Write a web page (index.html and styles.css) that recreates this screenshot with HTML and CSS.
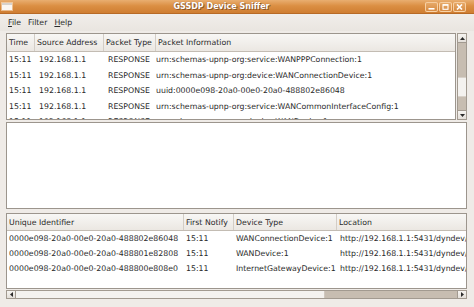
FILE: index.html
```html
<!DOCTYPE html>
<html>
<head>
<meta charset="utf-8">
<link rel="stylesheet" href="styles.css">
</head>
<body>
<div class="window">
  <div class="titlebar">
    <span class="winicon"></span>
    <span class="title">GSSDP Device Sniffer</span>
    <div class="wbtns">
      <span class="wbtn"><svg width="7" height="6" viewBox="0 0 7 6"><rect x="0.5" y="4" width="6" height="1.6" fill="#fff"/></svg></span>
      <span class="wbtn"><svg width="7" height="6" viewBox="0 0 7 6"><rect x="1" y="0.7" width="5" height="4.6" fill="none" stroke="#fff" stroke-width="1.1"/><rect x="1" y="0.5" width="5" height="1.2" fill="#fff"/></svg></span>
      <span class="wbtn"><svg width="7" height="6" viewBox="0 0 7 6"><path d="M1 0.5 L6 5.5 M6 0.5 L1 5.5" stroke="#fff" stroke-width="1.6"/></svg></span>
    </div>
  </div>
  <div class="menubar">
    <span class="mi"><u>F</u>ile</span>
    <span class="mi">Filter</span>
    <span class="mi"><u>H</u>elp</span>
  </div>
  <div class="content">
    <div class="upper">
      <div class="frame packets">
        <div class="hdr prow">
          <div class="hc c1">Time</div>
          <div class="hc c2">Source Address</div>
          <div class="hc c3">Packet Type</div>
          <div class="hc c4">Packet Information</div>
        </div>
        <div class="row prow">
          <div class="c c1">15:11</div><div class="c c2">192.168.1.1</div><div class="c c3">RESPONSE</div><div class="c c4">urn:schemas-upnp-org:service:WANPPPConnection:1</div>
        </div>
        <div class="row prow">
          <div class="c c1">15:11</div><div class="c c2">192.168.1.1</div><div class="c c3">RESPONSE</div><div class="c c4">urn:schemas-upnp-org:device:WANConnectionDevice:1</div>
        </div>
        <div class="row prow">
          <div class="c c1">15:11</div><div class="c c2">192.168.1.1</div><div class="c c3">RESPONSE</div><div class="c c4">uuid:0000e098-20a0-00e0-20a0-488802e86048</div>
        </div>
        <div class="row prow">
          <div class="c c1">15:11</div><div class="c c2">192.168.1.1</div><div class="c c3">RESPONSE</div><div class="c c4">urn:schemas-upnp-org:service:WANCommonInterfaceConfig:1</div>
        </div>
        <div class="row prow">
          <div class="c c1">15:11</div><div class="c c2">192.168.1.1</div><div class="c c3">RESPONSE</div><div class="c c4">urn:schemas-upnp-org:device:WANDevice:1</div>
        </div>
      </div>
      <div class="vscroll">
        <div class="sbtn"><svg width="5" height="3" viewBox="0 0 5 3"><polygon points="0,3 5,3 2.5,0" fill="#2a2a2a"/></svg></div>
        <div class="vtrough"><div class="vthumb"></div></div>
        <div class="sbtn"><svg width="5" height="3" viewBox="0 0 5 3"><polygon points="0,0 5,0 2.5,3" fill="#2a2a2a"/></svg></div>
      </div>
    </div>
    <div class="frame middle"></div>
    <div class="frame devices">
      <div class="hdr drow">
        <div class="hc d1">Unique Identifier</div>
        <div class="hc d2">First Notify</div>
        <div class="hc d3">Device Type</div>
        <div class="hc d4">Location</div>
      </div>
      <div class="row drow">
        <div class="c d1">0000e098-20a0-00e0-20a0-488802e86048</div><div class="c d2">15:11</div><div class="c d3">WANConnectionDevice:1</div><div class="c d4">http://192.168.1.1:5431/dyndev/uuid:0000e098-20a0-00e0-20a0-488802e86048</div>
      </div>
      <div class="row drow">
        <div class="c d1">0000e098-20a0-00e0-20a0-488801e82808</div><div class="c d2">15:11</div><div class="c d3">WANDevice:1</div><div class="c d4">http://192.168.1.1:5431/dyndev/uuid:0000e098-20a0-00e0-20a0-488801e82808</div>
      </div>
      <div class="row drow">
        <div class="c d1">0000e098-20a0-00e0-20a0-488800e808e0</div><div class="c d2">15:11</div><div class="c d3">InternetGatewayDevice:1</div><div class="c d4">http://192.168.1.1:5431/dyndev/uuid:0000e098-20a0-00e0-20a0-488800e808e0</div>
      </div>
    </div>
    <div class="hscroll">
      <div class="sbtn h"><svg width="3" height="5" viewBox="0 0 3 5"><polygon points="3,0 3,5 0,2.5" fill="#2a2a2a"/></svg></div>
      <div class="hthumb"></div>
      <div class="htrough"></div>
      <div class="sbtn h"><svg width="3" height="5" viewBox="0 0 3 5"><polygon points="0,0 0,5 3,2.5" fill="#2a2a2a"/></svg></div>
    </div>
  </div>
</div>
</body>
</html>
```

FILE: styles.css
```css
* { box-sizing: border-box; }
html, body { margin: 0; padding: 0; }
body {
  width: 474px;
  height: 307px;
  overflow: hidden;
  font-family: "DejaVu Sans", "Liberation Sans", sans-serif;
  font-size: 7.8px;
  color: #2a2a2a;
  background: #efebe7;
}
.window {
  width: 474px;
  height: 307px;
  display: flex;
  flex-direction: column;
  background: #efebe7;
}
.titlebar {
  height: 14px;
  flex: none;
  display: flex;
  align-items: center;
  padding: 0 8px 0 2px;
  background: linear-gradient(#e9ae70, #db8f43 45%, #cf7e32);
  border-bottom: 1px solid #b76a26;
}
.winicon {
  width: 10px;
  height: 7px;
  background: #fbf7f2;
  border-top: 2px solid #d8d2cb;
  box-shadow: 0 0 0 1px rgba(255, 240, 220, 0.5);
}
.title {
  flex: 1;
  text-align: center;
  padding-left: 6px;
  font-weight: bold;
  font-size: 8px;
  color: #fff;
  line-height: 13px;
  text-shadow: 1px 1px 0 #8e5727, 0 0 1px #9a5e2a;
}
.wbtns { display: flex; gap: 1px; }
.wbtn {
  width: 13px;
  height: 10px;
  border: 1px solid rgba(255, 225, 190, 0.75);
  border-radius: 2px;
  background: linear-gradient(#e7a968, #d68b43);
  display: flex;
  align-items: center;
  justify-content: center;
}
.menubar {
  height: 17px;
  flex: none;
  display: flex;
  align-items: center;
  gap: 7px;
  padding-left: 8px;
  background: linear-gradient(#f1eeea, #e9e5e0);
}
.mi { line-height: 17px; }
.mi u { text-decoration: underline; text-underline-offset: 1px; }
.content {
  flex: 1;
  display: flex;
  flex-direction: column;
  padding: 2px 7px 0 6px;
}
.frame {
  border: 1px solid #9c958d;
  background: #fff;
  overflow: hidden;
}
.upper {
  height: 87px;
  flex: none;
  display: flex;
  gap: 1px;
}
.packets { flex: 1; }
.prow {
  display: grid;
  grid-template-columns: 27px 69px 52px 1fr;
}
.drow {
  display: grid;
  grid-template-columns: 176px 50px 103px 1fr;
}
.hdr {
  height: 18px;
  background: linear-gradient(#f8f7f5, #ebe7e2);
  border-bottom: 1px solid #c3bcb3;
}
.devices .hdr { height: 17px; }
.hc {
  line-height: 17px;
  white-space: nowrap;
  overflow: hidden;
  padding-left: 2px;
}
.hc + .hc { border-left: 1px solid #d3cdc6; }
.row { height: 15.5px; }
.devices .row { height: 15px; }
.c {
  white-space: nowrap;
  overflow: hidden;
  line-height: 15.5px;
  padding-left: 2px;
}
.devices .c { line-height: 15px; }
.packets .c.c2, .packets .c.c3 { padding-left: 5px; }
.packets .c.c4 { padding-left: 1px; }
.devices .c.d2 { padding-left: 3px; }
.devices .c.d3 { padding-left: 3px; }
.devices .c.d4 { padding-left: 4px; }

.vscroll {
  width: 10px;
  flex: none;
  display: flex;
  flex-direction: column;
  border: 1px solid #a29a90;
  background: #c7bdb1;
}
.sbtn {
  flex: none;
  height: 9px;
  display: flex;
  align-items: center;
  justify-content: center;
  background: linear-gradient(#f6f4f1, #e4dfd9);
  border-bottom: 1px solid #a29a90;
}
.vscroll .sbtn:last-child { border-bottom: none; border-top: 1px solid #a29a90; }
.vtrough {
  flex: 1;
  padding-top: 34px;
}
.vthumb {
  height: 20px;
  background: #f4f2ef;
  border-top: 1px solid #d8d1c9;
  border-bottom: 1px solid #d8d1c9;
}
.middle {
  height: 87px;
  flex: none;
  margin-top: 2px;
}
.devices {
  height: 76px;
  flex: none;
  margin-top: 4px;
}
.hscroll {
  height: 9px;
  flex: none;
  margin-top: 1px;
  display: flex;
  border: 1px solid #a29a90;
  background: #c7bdb1;
}
.sbtn.h {
  height: auto;
  width: 9px;
  border-bottom: none;
  border-right: 1px solid #a29a90;
}
.hscroll .sbtn.h:last-child { border-right: none; border-left: 1px solid #a29a90; }
.hthumb {
  width: 309px;
  flex: none;
  background: #f4f2ef;
  border-right: 1px solid #d0c8bf;
}
.htrough { flex: 1; }
```
